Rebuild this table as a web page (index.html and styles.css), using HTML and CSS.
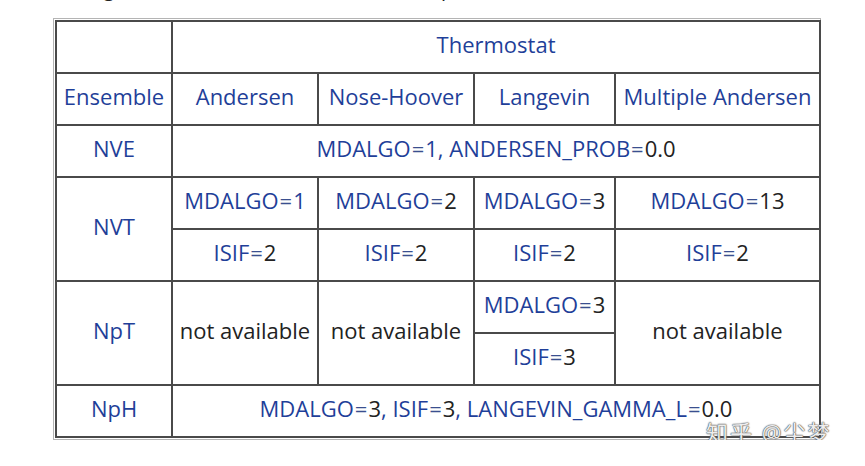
FILE: index.html
```html
<!DOCTYPE html>
<html>
<head>
<meta charset="utf-8">
<link rel="stylesheet" href="styles.css">
</head>
<body>
<p class="intro">Using this table below one can now set up the ensemble in VASP.</p>
<div class="frame">
<table class="md">
  <colgroup>
    <col class="c1"><col class="c2"><col class="c3"><col class="c4"><col class="c5">
  </colgroup>
  <tr>
    <td></td>
    <td colspan="4"><span class="k">Thermostat</span></td>
  </tr>
  <tr>
    <td><span class="k">Ensemble</span></td>
    <td><span class="k">Andersen</span></td>
    <td><span class="k">Nose-Hoover</span></td>
    <td><span class="k">Langevin</span></td>
    <td><span class="k">Multiple Andersen</span></td>
  </tr>
  <tr>
    <td><span class="k">NVE</span></td>
    <td colspan="4"><span class="k">MDALGO<span class="eq">=</span>1, ANDERSEN_PROB<span class="eq">=</span></span><span class="v">0.0</span></td>
  </tr>
  <tr>
    <td rowspan="2"><span class="k">NVT</span></td>
    <td><span class="k">MDALGO<span class="eq">=</span>1</span></td>
    <td><span class="k">MDALGO<span class="eq">=</span></span><span class="v">2</span></td>
    <td><span class="k">MDALGO<span class="eq">=</span></span><span class="v">3</span></td>
    <td><span class="k">MDALGO<span class="eq">=</span></span><span class="v">13</span></td>
  </tr>
  <tr>
    <td><span class="k">ISIF<span class="eq">=</span></span><span class="v">2</span></td>
    <td><span class="k">ISIF<span class="eq">=</span></span><span class="v">2</span></td>
    <td><span class="k">ISIF<span class="eq">=</span></span><span class="v">2</span></td>
    <td><span class="k">ISIF<span class="eq">=</span></span><span class="v">2</span></td>
  </tr>
  <tr>
    <td rowspan="2"><span class="k">NpT</span></td>
    <td rowspan="2"><span class="v">not available</span></td>
    <td rowspan="2"><span class="v">not available</span></td>
    <td><span class="k">MDALGO<span class="eq">=</span></span><span class="v">3</span></td>
    <td rowspan="2"><span class="v">not available</span></td>
  </tr>
  <tr>
    <td><span class="k">ISIF<span class="eq">=</span></span><span class="v">3</span></td>
  </tr>
  <tr>
    <td><span class="k">NpH</span></td>
    <td colspan="4"><span class="k">MDALGO<span class="eq">=</span></span><span class="v">3</span><span class="k">, ISIF<span class="eq">=</span></span><span class="v">3</span><span class="k">, LANGEVIN_GAMMA_L<span class="eq">=</span></span><span class="v">0.0</span></td>
  </tr>
</table>
<div class="mark">知乎 @尘梦</div>
</div>
</body>
</html>
```
FILE: styles.css
```css
html, body {
  margin: 0;
  padding: 0;
  background: #ffffff;
}
body {
  font-family: "Open Sans", "Noto Sans CJK SC", sans-serif;
  font-size: 22px;
  color: #222;
}
.intro {
  margin: -21px 0 0 62px;
  height: 39px;
  line-height: 20px;
  white-space: nowrap;
  color: #222;
  font-size: 20px;
}
.frame {
  position: relative;
  margin: 0 0 0 53px;
  width: 764px;
  border: 1px solid #b4b4b4;
  padding: 1px;
}
.md {
  border-collapse: collapse;
  table-layout: fixed;
  width: 764px;
}
.c1 { width: 116px; }
.c2 { width: 146px; }
.c3 { width: 156px; }
.c4 { width: 141px; }
.c5 { width: 205px; }
.md td {
  border: 2px solid #4a4a4a;
  height: 44px;
  padding: 0 0 6px;
  text-align: center;
  vertical-align: middle;
  white-space: nowrap;
  line-height: 26px;
}
.k { color: #1f3f99; }
.v { color: #222; }
.eq {
  padding: 0 1px;
  color: #3a4f8f;
}
.mark {
  position: absolute;
  left: 652px;
  top: 396px;
  font-size: 22px;
  color: rgba(255, 255, 255, 0.92);
  text-shadow: 0 0 1px #444, 0 0 1px #555, 0 0 2px #888;
  letter-spacing: 2px;
  white-space: nowrap;
}
```
